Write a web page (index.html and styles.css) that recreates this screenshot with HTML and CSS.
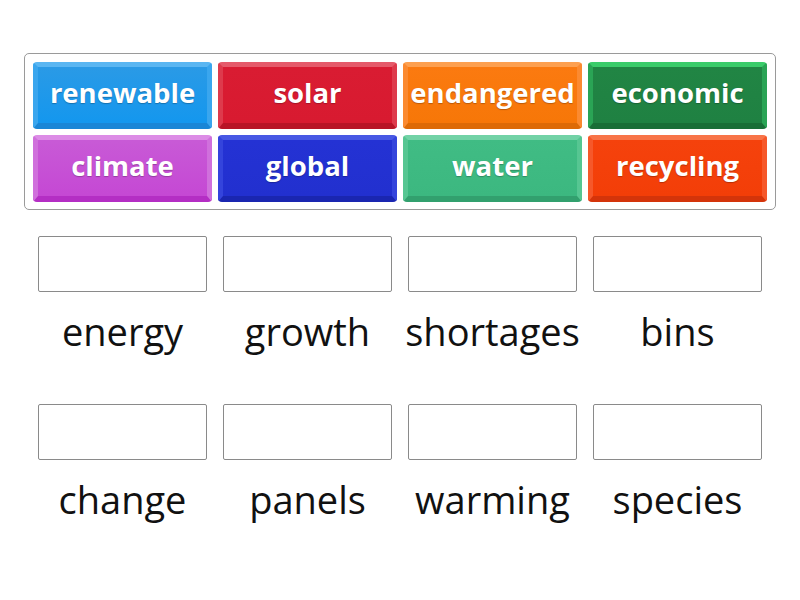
FILE: index.html
```html
<!DOCTYPE html>
<html>
<head>
<meta charset="utf-8">
<link rel="stylesheet" href="styles.css">
</head>
<body>
<div class="page">
  <div class="bank">
    <div class="tile c-blue">renewable</div>
    <div class="tile c-red">solar</div>
    <div class="tile c-orange">endangered</div>
    <div class="tile c-green">economic</div>
    <div class="tile c-purple">climate</div>
    <div class="tile c-indigo">global</div>
    <div class="tile c-teal">water</div>
    <div class="tile c-fire">recycling</div>
  </div>
  <div class="targets">
    <div class="slot"><div class="box"></div><div class="label">energy</div></div>
    <div class="slot"><div class="box"></div><div class="label">growth</div></div>
    <div class="slot"><div class="box"></div><div class="label">shortages</div></div>
    <div class="slot"><div class="box"></div><div class="label">bins</div></div>
    <div class="slot"><div class="box"></div><div class="label">change</div></div>
    <div class="slot"><div class="box"></div><div class="label">panels</div></div>
    <div class="slot"><div class="box"></div><div class="label">warming</div></div>
    <div class="slot"><div class="box"></div><div class="label">species</div></div>
  </div>
</div>
</body>
</html>
```
FILE: styles.css
```css
html, body {
  margin: 0;
  padding: 0;
  background: #ffffff;
}
body {
  font-family: "Open Sans", "DejaVu Sans", sans-serif;
}
.page {
  width: 800px;
  height: 600px;
  padding-top: 53px;
  box-sizing: border-box;
}
.bank {
  margin: 0 24px;
  width: 752px;
  height: 157px;
  box-sizing: border-box;
  border: 1px solid #9a9a9a;
  border-radius: 5px;
  padding: 8px 8px 7px 8px;
  display: grid;
  grid-template-columns: repeat(4, 179px);
  grid-template-rows: 67px 67px;
  column-gap: 6px;
  row-gap: 6px;
}
.tile {
  box-sizing: border-box;
  border-radius: 4px;
  border-style: solid;
  border-width: 5px 5px 6px 5px;
  padding-bottom: 5px;
  display: flex;
  align-items: center;
  justify-content: center;
  color: #ffffff;
  font-weight: 700;
  font-size: 27.5px;
  text-shadow: 0 1px 1px rgba(0,0,0,0.25);
  white-space: nowrap;
}
.c-blue { background: linear-gradient(#2a9ae6, #1497ee); border-color: #5ab6f2 #3aa6ee #1a86d6 #3aa6ee; }
.c-red { background: linear-gradient(#d91c32, #d81a30); border-color: #e55a6a #de3a4c #b81426 #de3a4c; }
.c-orange { background: linear-gradient(#fb7a10, #f77708); border-color: #fda050 #fb8a30 #dd6a06 #fb8a30; }
.c-green { background: linear-gradient(#218544, #1f8142); border-color: #3acc6a #2aa455 #196e37 #2aa455; }
.c-purple { background: linear-gradient(#c85ad6, #c548d4); border-color: #dc8ce6 #d070dc #b42ec4 #d070dc; }
.c-indigo { background: linear-gradient(#2432d4, #2230cf); border-color: #4858e4 #3444dc #1a26b0 #3444dc; }
.c-teal { background: linear-gradient(#40bc84, #3cb880); border-color: #72d2a6 #56c692 #32a06e #56c692; }
.c-fire { background: linear-gradient(#f5420c, #f33e08); border-color: #f87448 #f6582a #d4340a #f6582a; }
.targets {
  margin: 26px 0 0 30px;
  display: grid;
  grid-template-columns: repeat(4, 185px);
  row-gap: 0;
}
.slot {
  height: 168px;
  display: flex;
  flex-direction: column;
  align-items: center;
}
.box {
  width: 169px;
  height: 56px;
  box-sizing: border-box;
  border: 1px solid #8a8a8a;
  border-radius: 2px;
  background: #ffffff;
}
.label {
  margin-top: 14px;
  font-size: 38px;
  line-height: 50px;
  color: #111111;
  white-space: nowrap;
}
```
